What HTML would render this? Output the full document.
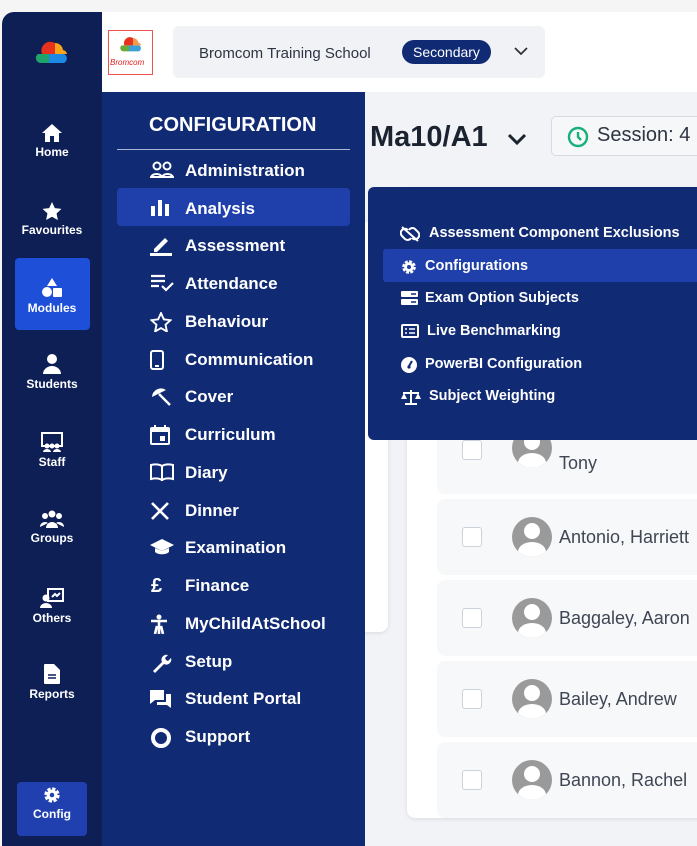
<!DOCTYPE html>
<html><head><meta charset="utf-8"><style>
*{box-sizing:border-box;margin:0;padding:0}
body{width:697px;height:846px;overflow:hidden;background:#f5f5f6;font-family:"Liberation Sans",sans-serif;position:relative}
.abs{position:absolute}
#rail{left:2px;top:12px;width:100px;height:834px;background:#0d1f55;border-top-left-radius:12px}
.ri{position:absolute;left:0;width:100px;text-align:center;color:#fff;font-size:12px;font-weight:bold}
.ri svg{display:block;margin:0 auto 3px}
#top{left:102px;top:12px;width:595px;height:80px;background:#fff}
#main{left:365px;top:92px;width:332px;height:754px;background:#f1f3f7}
#cfg{left:102px;top:92px;width:263px;height:754px;background:#102a74;color:#fff}
.ci{position:absolute;left:15px;width:233px;height:38px;font-size:17px;font-weight:bold;line-height:38px;padding-left:68px}
.ci svg{position:absolute;left:33px;top:9px}
#sub{left:368px;top:187px;width:340px;height:253px;background:#102a74;border-radius:6px;color:#fff}
.si{position:absolute;left:15px;width:330px;height:32px;line-height:32px;font-size:14.5px;font-weight:bold;padding-left:46px}
.si svg{position:absolute;left:18px;top:9px}
.row{position:absolute;left:437px;width:270px;height:76px;background:#f7f8fa;border-radius:8px}
.cb{position:absolute;left:25px;width:20px;height:20px;border:1px solid #ccd2da;border-radius:3px;background:#fff}
.av{position:absolute;left:75px;width:40px;height:40px;border-radius:50%;background:#9a9a9a;overflow:hidden}
.nm{position:absolute;left:122px;font-size:18px;color:#3f4654}
</style></head><body>
<div id="rail" class="abs">
 <svg class="abs" style="left:32px;top:28px" width="36" height="24" viewBox="0 0 36 24"><path d="M4 14h11v9H6a5 5 0 0 1-2-9z" fill="#1fa36a"/><path d="M15 14h12v9H15z" fill="#1e88e5"/><path d="M27 14h3a5 5 0 0 1 0 9h-3z" fill="#1e88e5"/><path d="M8 14a9 9 0 0 1 13-11v11z" fill="#e8321e"/><path d="M21 3a8 8 0 0 1 8 7 5 5 0 0 1 4 4H21z" fill="#f6a51a"/></svg>
 <div class="ri" style="top:112px"><svg width="20" height="18" viewBox="0 0 20 18"><path d="M10 0L0 9h3v9h5v-6h4v6h5V9h3z" fill="#fff"/></svg>Home</div>
 <div class="ri" style="top:190px"><svg width="20" height="18" viewBox="0 0 20 19"><path d="M10 0l3 6.5 7 .8-5.2 4.8 1.4 7L10 15.6 3.8 19l1.4-7L0 7.3l7-.8z" fill="#fff"/></svg>Favourites</div>
 <div class="abs" style="left:13px;top:246px;width:75px;height:72px;background:#1e4fd8;border-radius:4px"></div>
 <div class="ri" style="top:266px"><svg width="20" height="20" viewBox="0 0 20 20"><path d="M10 0l5 8H5z" fill="#fff"/><circle cx="5" cy="14" r="5" fill="#fff"/><rect x="11" y="10" width="9" height="9" rx="1" fill="#fff"/></svg>Modules</div>
 <div class="ri" style="top:342px"><svg width="18" height="20" viewBox="0 0 18 20"><circle cx="9" cy="5" r="5" fill="#fff"/><path d="M0 20a9 8 0 0 1 18 0z" fill="#fff"/></svg>Students</div>
 <div class="ri" style="top:420px"><svg width="22" height="20" viewBox="0 0 22 20"><rect x="1" y="1" width="20" height="13" fill="none" stroke="#fff" stroke-width="2"/><circle cx="6" cy="14" r="2.5" fill="#fff"/><circle cx="16" cy="14" r="2.5" fill="#fff"/><circle cx="11" cy="14" r="2.5" fill="#fff"/><path d="M2 20a4 3 0 0 1 8 0zM12 20a4 3 0 0 1 8 0z" fill="#fff"/></svg>Staff</div>
 <div class="ri" style="top:498px"><svg width="24" height="18" viewBox="0 0 24 18"><circle cx="12" cy="4" r="3.5" fill="#fff"/><circle cx="5" cy="6" r="3" fill="#fff"/><circle cx="19" cy="6" r="3" fill="#fff"/><path d="M6 18a6 6 0 0 1 12 0zM0 17a5 5 0 0 1 8-4M24 17a5 5 0 0 0-8-4" fill="#fff"/></svg>Groups</div>
 <div class="ri" style="top:576px"><svg width="24" height="20" viewBox="0 0 24 20"><rect x="8" y="1" width="15" height="12" fill="none" stroke="#fff" stroke-width="2"/><path d="M12 9l3-3 2 2 3-3" stroke="#fff" stroke-width="2" fill="none"/><circle cx="6" cy="10" r="3.5" fill="#fff"/><path d="M0 20a6 5 0 0 1 12 0z" fill="#fff"/></svg>Others</div>
 <div class="ri" style="top:652px"><svg width="16" height="20" viewBox="0 0 16 20"><path d="M0 1a1 1 0 0 1 1-1h9l6 6v13a1 1 0 0 1-1 1H1a1 1 0 0 1-1-1z" fill="#fff"/><path d="M4 11h8M4 14h8" stroke="#0d1f55" stroke-width="1.5"/></svg>Reports</div>
 <div class="abs" style="left:15px;top:770px;width:70px;height:54px;background:#2040b0;border-radius:4px"></div>
 <div class="ri" style="top:774px"><svg width="18" height="18" viewBox="0 0 20 20"><circle cx="10" cy="10" r="6.5" fill="none" stroke="#fff" stroke-width="4" stroke-dasharray="3.4 1.7"/><circle cx="10" cy="10" r="6" fill="#fff"/><circle cx="10" cy="10" r="2.5" fill="#2040b0"/></svg>Config</div>
</div>
<div id="top" class="abs">
 <div class="abs" style="left:6px;top:18px;width:45px;height:45px;border:1px solid #f05050;background:#fff"></div>
 <svg class="abs" style="left:16px;top:24px" width="26" height="16" viewBox="0 0 36 24"><path d="M4 14h11v9H6a5 5 0 0 1-2-9z" fill="#6aab3a"/><path d="M15 14h15a5 5 0 0 1 0 9H15z" fill="#3ba0d8"/><path d="M8 14a9 9 0 0 1 13-11v11z" fill="#e8321e"/><path d="M21 3a8 8 0 0 1 8 7 5 5 0 0 1 4 4H21z" fill="#f09a50"/></svg>
 <div class="abs" style="left:8px;top:46px;font-size:8px;color:#e02020;font-style:italic">Bromcom</div>
 <div class="abs" style="left:71px;top:14px;width:372px;height:52px;background:#f0f2f6;border-radius:6px">
  <span class="abs" style="left:26px;top:19px;font-size:15px;color:#2e3441">Bromcom Training School</span>
  <span class="abs" style="left:229px;top:14px;height:24px;padding:0 11px;line-height:24px;background:#102a74;color:#fff;border-radius:12px;font-size:14px">Secondary</span>
  <svg class="abs" style="left:341px;top:21px" width="14" height="9" viewBox="0 0 14 9"><path d="M1 1l6 6 6-6" stroke="#333" stroke-width="1.8" fill="none"/></svg>
 </div>
</div>
<div id="main" class="abs">
 <span class="abs" style="left:5px;top:29px;font-size:29px;font-weight:bold;color:#1c2330">Ma10/A1</span>
 <svg class="abs" style="left:142px;top:41px" width="20" height="12" viewBox="0 0 20 12"><path d="M2 2l8 8 8-8" stroke="#1c2330" stroke-width="3" fill="none"/></svg>
 <div class="abs" style="left:186px;top:24px;width:160px;height:40px;background:#f6f7f9;border:1px solid #d7dbe2;border-radius:5px">
  <svg class="abs" style="left:15px;top:9px" width="22" height="22" viewBox="0 0 22 22"><circle cx="11" cy="11" r="9" fill="none" stroke="#17b07a" stroke-width="2.4"/><path d="M11 6v5l3 3" stroke="#17b07a" stroke-width="2.4" fill="none"/></svg>
  <span class="abs" style="left:45px;top:7px;font-size:20px;color:#2e3441">Session: 4</span>
 </div>
 <div class="abs" style="left:-30px;top:130px;width:53px;height:410px;background:#fff;border-radius:8px;box-shadow:0 1px 4px rgba(0,0,0,.1)"></div>
 <div class="abs" style="left:42px;top:96px;width:300px;height:630px;background:#fff;border-radius:8px;box-shadow:0 1px 4px rgba(0,0,0,.1)"></div>
</div>
<div class="row" style="top:418px"><div class="cb" style="top:22px"></div><div class="av" style="top:10px"><div class="abs" style="left:12px;top:6px;width:16px;height:16px;border-radius:50%;background:#fff"></div><div class="abs" style="left:6px;top:25px;width:28px;height:20px;border-radius:50%;background:#fff"></div></div><span class="nm" style="top:35px">Tony</span></div>
<div class="row" style="top:499px"><div class="cb" style="top:28px"></div><div class="av" style="top:18px"><div class="abs" style="left:12px;top:6px;width:16px;height:16px;border-radius:50%;background:#fff"></div><div class="abs" style="left:6px;top:25px;width:28px;height:20px;border-radius:50%;background:#fff"></div></div><span class="nm" style="top:28px">Antonio, Harriett</span></div>
<div class="row" style="top:580px"><div class="cb" style="top:28px"></div><div class="av" style="top:18px"><div class="abs" style="left:12px;top:6px;width:16px;height:16px;border-radius:50%;background:#fff"></div><div class="abs" style="left:6px;top:25px;width:28px;height:20px;border-radius:50%;background:#fff"></div></div><span class="nm" style="top:28px">Baggaley, Aaron</span></div>
<div class="row" style="top:661px"><div class="cb" style="top:28px"></div><div class="av" style="top:18px"><div class="abs" style="left:12px;top:6px;width:16px;height:16px;border-radius:50%;background:#fff"></div><div class="abs" style="left:6px;top:25px;width:28px;height:20px;border-radius:50%;background:#fff"></div></div><span class="nm" style="top:28px">Bailey, Andrew</span></div>
<div class="row" style="top:742px"><div class="cb" style="top:28px"></div><div class="av" style="top:18px"><div class="abs" style="left:12px;top:6px;width:16px;height:16px;border-radius:50%;background:#fff"></div><div class="abs" style="left:6px;top:25px;width:28px;height:20px;border-radius:50%;background:#fff"></div></div><span class="nm" style="top:28px">Bannon, Rachel</span></div>
<div id="cfg" class="abs">
 <div class="abs" style="left:47px;top:22px;font-size:20px;font-weight:bold">CONFIGURATION</div>
 <div class="abs" style="left:15px;top:57px;width:233px;height:1px;background:#aab4d4"></div>
 <div class="abs" style="left:15px;top:96px;width:233px;height:38px;background:#1f40ab;border-radius:4px"></div>
 <div class="ci" style="top:60px"><svg width="24" height="18" viewBox="0 0 24 18"><circle cx="7" cy="5" r="3.5" fill="none" stroke="#fff" stroke-width="2"/><circle cx="17" cy="5" r="3.5" fill="none" stroke="#fff" stroke-width="2"/><path d="M1 16a6 5 0 0 1 11 0zM12 16a6 5 0 0 1 11 0z" fill="none" stroke="#fff" stroke-width="2"/></svg>Administration</div>
 <div class="ci" style="top:98px"><svg width="20" height="18" viewBox="0 0 20 18"><rect x="1" y="7" width="4" height="10" fill="#fff"/><rect x="8" y="1" width="4" height="16" fill="#fff"/><rect x="15" y="5" width="4" height="12" fill="#fff"/></svg>Analysis</div>
 <div class="ci" style="top:135px"><svg width="22" height="20" viewBox="0 0 22 20"><path d="M4 13L15 2l3 3L7 16H4z" fill="#fff"/><rect x="0" y="17" width="22" height="3" fill="#fff"/></svg>Assessment</div>
 <div class="ci" style="top:173px"><svg width="24" height="18" viewBox="0 0 24 18"><path d="M1 2h14M1 7h14M1 12h8M12 12l4 4 7-7" stroke="#fff" stroke-width="2.2" fill="none"/></svg>Attendance</div>
 <div class="ci" style="top:211px"><svg width="22" height="20" viewBox="0 0 20 19"><path d="M10 1l2.7 6 6.3.8-4.7 4.3 1.3 6.4L10 15.3l-5.6 3.2 1.3-6.4L1 7.8l6.3-.8z" fill="none" stroke="#fff" stroke-width="1.8"/></svg>Behaviour</div>
 <div class="ci" style="top:249px"><svg width="14" height="20" viewBox="0 0 14 20"><rect x="1" y="1" width="12" height="18" rx="2" fill="none" stroke="#fff" stroke-width="2"/><path d="M5 16h4" stroke="#fff" stroke-width="2"/></svg>Communication</div>
 <div class="ci" style="top:286px"><svg width="22" height="20" viewBox="0 0 22 20"><path d="M2 10a9 9 0 0 1 14-7z" fill="#fff"/><path d="M9 7l11 11" stroke="#fff" stroke-width="2.4"/></svg>Cover</div>
 <div class="ci" style="top:324px"><svg width="20" height="20" viewBox="0 0 20 20"><rect x="1" y="3" width="18" height="16" rx="1" fill="none" stroke="#fff" stroke-width="2"/><rect x="1" y="3" width="18" height="4" fill="#fff"/><path d="M5 0v4M15 0v4" stroke="#fff" stroke-width="2"/><rect x="10" y="11" width="5" height="5" fill="#fff"/></svg>Curriculum</div>
 <div class="ci" style="top:362px"><svg width="24" height="18" viewBox="0 0 24 18"><path d="M1 2c4-1 8-1 11 1v14c-3-2-7-2-11-1zM23 2c-4-1-8-1-11 1v14c3-2 7-2 11-1z" fill="none" stroke="#fff" stroke-width="2"/></svg>Diary</div>
 <div class="ci" style="top:400px"><svg width="20" height="20" viewBox="0 0 20 20"><path d="M2 2l16 16M18 2L2 18" stroke="#fff" stroke-width="2.6"/></svg>Dinner</div>
 <div class="ci" style="top:437px"><svg width="24" height="18" viewBox="0 0 24 18"><path d="M12 1L0 7l12 6 12-6z" fill="#fff"/><path d="M5 10v4c3 3 11 3 14 0v-4l-7 3z" fill="#fff"/></svg>Examination</div>
 <div class="ci" style="top:475px"><span style="position:absolute;left:34px;top:0;font-size:20px">£</span>Finance</div>
 <div class="ci" style="top:513px"><svg width="18" height="20" viewBox="0 0 18 20"><circle cx="9" cy="3" r="2.5" fill="#fff"/><path d="M1 7h16M9 7v13M5 20l2-8M13 20l-2-8" stroke="#fff" stroke-width="2.6"/></svg>MyChildAtSchool</div>
 <div class="ci" style="top:551px"><svg width="22" height="22" viewBox="0 0 22 22"><path d="M3 19L12 10a5 5 0 0 1 6-7l-3 3 1 2 2 1 3-3a5 5 0 0 1-7 6L5 21z" fill="#fff"/></svg>Setup</div>
 <div class="ci" style="top:588px"><svg width="22" height="20" viewBox="0 0 22 20"><path d="M0 1h14v10H5l-5 4z" fill="#fff"/><path d="M16 5h5v14l-4-3H7v-3h9z" fill="#fff"/></svg>Student Portal</div>
 <div class="ci" style="top:626px"><svg width="22" height="22" viewBox="0 0 22 22"><circle cx="11" cy="11" r="8" fill="none" stroke="#fff" stroke-width="4"/></svg>Support</div>
</div>
<div id="sub" class="abs">
 <div class="abs" style="left:15px;top:62px;width:330px;height:33px;background:#1f40ab;border-radius:3px"></div>
 <div class="si" style="top:30px;padding-left:46px"><svg width="20" height="16" viewBox="0 0 20 16" style="left:17px"><path d="M8 4a4 4 0 0 0-6 6l3 3a4 4 0 0 0 6-1M12 12a4 4 0 0 0 6-6l-3-3a4 4 0 0 0-6 1M2 1l16 14" stroke="#fff" stroke-width="2" fill="none"/></svg>Assessment Component Exclusions</div>
 <div class="si" style="top:63px;padding-left:42px"><svg width="16" height="16" viewBox="0 0 20 20" style="left:18px"><circle cx="10" cy="10" r="6.5" fill="none" stroke="#fff" stroke-width="4" stroke-dasharray="3.4 1.7"/><circle cx="10" cy="10" r="6" fill="#fff"/><circle cx="10" cy="10" r="2.5" fill="#1f40ab"/></svg>Configurations</div>
 <div class="si" style="top:95px;padding-left:42px"><svg width="17" height="14" viewBox="0 0 17 14" style="left:18px"><rect x="0" y="0" width="17" height="6" rx="1" fill="#fff"/><rect x="0" y="8" width="17" height="6" rx="1" fill="#fff"/><path d="M10 3h5M10 11h5" stroke="#102a74" stroke-width="1.4"/></svg>Exam Option Subjects</div>
 <div class="si" style="top:128px;padding-left:44px"><svg width="18" height="14" viewBox="0 0 18 14" style="left:18px"><rect x="1" y="1" width="16" height="12" rx="1" fill="none" stroke="#fff" stroke-width="2"/><path d="M4 5h2M8 5h6M4 9h2M8 9h6" stroke="#fff" stroke-width="1.6"/></svg>Live Benchmarking</div>
 <div class="si" style="top:161px;padding-left:42px"><svg width="16" height="16" viewBox="0 0 16 16" style="left:18px"><circle cx="8" cy="8" r="8" fill="#fff"/><path d="M8 9l3-5" stroke="#102a74" stroke-width="2"/><circle cx="8" cy="10" r="1.6" fill="#102a74"/></svg>PowerBI Configuration</div>
 <div class="si" style="top:193px;padding-left:46px"><svg width="20" height="16" viewBox="0 0 20 16" style="left:18px"><path d="M10 1v13M4 15h12M2 4h16" stroke="#fff" stroke-width="2"/><path d="M0 10l3-6 3 6zM14 10l3-6 3 6z" fill="#fff"/></svg>Subject Weighting</div>
</div>
</body></html>
